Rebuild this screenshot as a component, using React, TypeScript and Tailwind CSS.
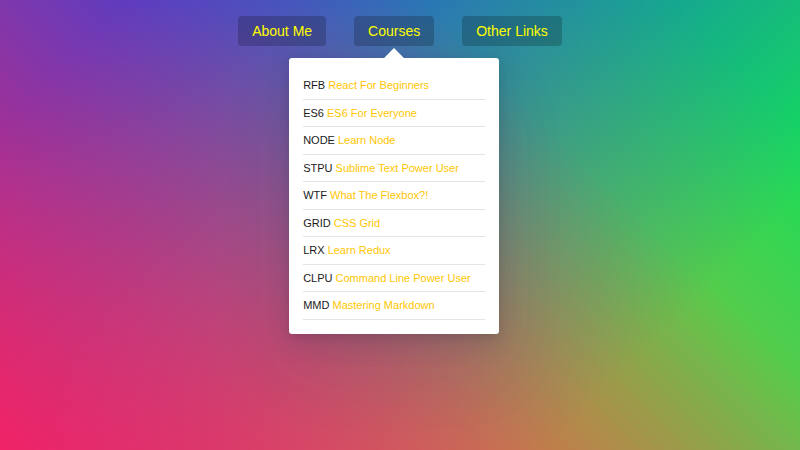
import React from "react";

const courses: [string, string][] = [
  ["RFB", "React For Beginners"],
  ["ES6", "ES6 For Everyone"],
  ["NODE", "Learn Node"],
  ["STPU", "Sublime Text Power User"],
  ["WTF", "What The Flexbox?!"],
  ["GRID", "CSS Grid"],
  ["LRX", "Learn Redux"],
  ["CLPU", "Command Line Power User"],
  ["MMD", "Mastering Markdown"],
];

const btn =
  "m-[14px] inline-block rounded-[4px] bg-black/20 px-[14px] py-[7px] text-[14px] leading-[16px] text-[#ffff00] no-underline";

export default function App() {
  return (
    <div
      className="h-screen w-full overflow-hidden bg-[linear-gradient(45deg,hsla(340,88%,54%,1)_0%,hsla(340,88%,54%,0)_70%),linear-gradient(135deg,hsla(225,85%,50%,1)_10%,hsla(225,85%,50%,0)_80%),linear-gradient(225deg,hsla(140,82%,48%,1)_10%,hsla(140,82%,48%,0)_80%),linear-gradient(315deg,hsla(35,85%,55%,1)_100%,hsla(35,85%,55%,0)_70%)]"
      style={{ fontFamily: '"Liberation Sans", Arial, sans-serif' }}
    >
      <nav className="pt-[2px]">
        <ul className="m-0 flex list-none justify-center p-0">
          <li className="relative flex justify-center">
            <a href="#" className={btn}>About Me</a>
          </li>
          <li className="relative flex justify-center">
            <a href="#" className={btn}>Courses</a>
            <div className="absolute top-[56px] z-10 w-[210px] rounded-[3px] bg-white shadow-[0_35px_70px_rgba(50,50,93,0.1),0_10px_25px_rgba(50,50,93,0.15),0_3px_10px_rgba(0,0,0,0.1)]">
              <span className="absolute left-1/2 top-0 h-[14px] w-[14px] -translate-x-1/2 -translate-y-1/2 rotate-45 bg-white" />
              <ul className="relative m-0 list-none p-[14px]">
                {courses.map(([code, name]) => (
                  <li
                    key={code}
                    className="block border-b border-[#e4e4e4] py-[7px] text-[11px] leading-[12.5px] text-[#1a1a1a]"
                  >
                    {code} <a href="#" className="text-[#ffc600] no-underline">{name}</a>
                  </li>
                ))}
              </ul>
            </div>
          </li>
          <li className="relative flex justify-center">
            <a href="#" className={btn}>Other Links</a>
          </li>
        </ul>
      </nav>
    </div>
  );
}
